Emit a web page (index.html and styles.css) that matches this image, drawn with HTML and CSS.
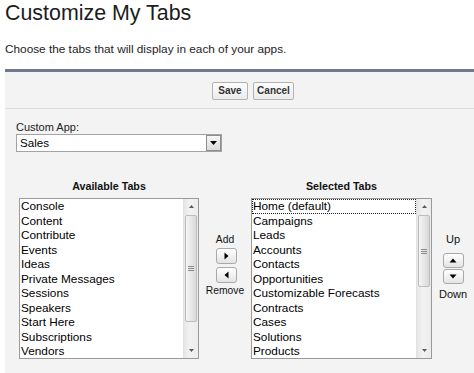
FILE: index.html
```html
<!DOCTYPE html>
<html>
<head>
<meta charset="utf-8">
<title>Customize My Tabs</title>
<link rel="stylesheet" href="styles.css">
</head>
<body>
<h1 class="title">Customize My Tabs</h1>
<p class="intro">Choose the tabs that will display in each of your apps.</p>
<div class="panel">
  <div class="btn-row">
    <button class="btn btn-save">Save</button>
    <button class="btn btn-cancel">Cancel</button>
  </div>
  <div class="panel-body">
    <div class="field-label">Custom App:</div>
    <div class="select">
      <span class="select-value">Sales</span>
      <span class="select-arrow"><svg width="7" height="4" viewBox="0 0 7 4"><path d="M0 0H7L3.5 4Z" fill="#000"/></svg></span>
    </div>
    <div class="duel">
      <div class="col col-avail">
        <div class="col-title">Available Tabs</div>
        <div class="listbox">
          <div class="items">
            <div class="item">Console</div>
            <div class="item">Content</div>
            <div class="item">Contribute</div>
            <div class="item">Events</div>
            <div class="item">Ideas</div>
            <div class="item">Private Messages</div>
            <div class="item">Sessions</div>
            <div class="item">Speakers</div>
            <div class="item">Start Here</div>
            <div class="item">Subscriptions</div>
            <div class="item">Vendors</div>
          </div>
          <div class="scrollbar">
            <div class="sb-btn"><svg width="5" height="3" viewBox="0 0 5 3"><path d="M0 3H5L2.5 0Z" fill="#5a5a5a"/></svg></div>
            <div class="sb-track">
              <div class="sb-thumb thumb-avail"><svg width="6" height="5" viewBox="0 0 6 5"><path d="M0 0.5H6M0 2.5H6M0 4.5H6" stroke="#8a8a8a" stroke-width="1"/></svg></div>
            </div>
            <div class="sb-btn"><svg width="5" height="3" viewBox="0 0 5 3"><path d="M0 0H5L2.5 3Z" fill="#5a5a5a"/></svg></div>
          </div>
        </div>
      </div>
      <div class="mover">
        <div class="mover-label">Add</div>
        <button class="arrow-btn arrow-first"><svg width="5" height="8" viewBox="0 0 5 8"><path d="M0.5 0.5L4.5 4L0.5 7.5Z" fill="#000"/></svg></button>
        <button class="arrow-btn arrow-second"><svg width="5" height="8" viewBox="0 0 5 8"><path d="M4.5 0.5L0.5 4L4.5 7.5Z" fill="#000"/></svg></button>
        <div class="mover-label mover-label-bottom">Remove</div>
      </div>
      <div class="col col-sel">
        <div class="col-title">Selected Tabs</div>
        <div class="listbox">
          <div class="items">
            <div class="item item-focus">Home (default)</div>
            <div class="item">Campaigns</div>
            <div class="item">Leads</div>
            <div class="item">Accounts</div>
            <div class="item">Contacts</div>
            <div class="item">Opportunities</div>
            <div class="item">Customizable Forecasts</div>
            <div class="item">Contracts</div>
            <div class="item">Cases</div>
            <div class="item">Solutions</div>
            <div class="item">Products</div>
          </div>
          <div class="scrollbar">
            <div class="sb-btn"><svg width="5" height="3" viewBox="0 0 5 3"><path d="M0 3H5L2.5 0Z" fill="#5a5a5a"/></svg></div>
            <div class="sb-track">
              <div class="sb-thumb thumb-sel"><svg width="6" height="5" viewBox="0 0 6 5"><path d="M0 0.5H6M0 2.5H6M0 4.5H6" stroke="#8a8a8a" stroke-width="1"/></svg></div>
            </div>
            <div class="sb-btn"><svg width="5" height="3" viewBox="0 0 5 3"><path d="M0 0H5L2.5 3Z" fill="#5a5a5a"/></svg></div>
          </div>
        </div>
      </div>
      <div class="mover mover-order">
        <div class="mover-label order-label">Up</div>
        <button class="arrow-btn order-btn order-first"><svg width="8" height="5" viewBox="0 0 8 5"><path d="M0.5 4.5L4 0.5L7.5 4.5Z" fill="#000"/></svg></button>
        <button class="arrow-btn order-btn order-second"><svg width="8" height="5" viewBox="0 0 8 5"><path d="M0.5 0.5L4 4.5L7.5 0.5Z" fill="#000"/></svg></button>
        <div class="mover-label order-label order-label-bottom">Down</div>
      </div>
    </div>
  </div>
</div>
</body>
</html>
```

FILE: styles.css
```css
html, body {
  margin: 0;
  background: #fff;
}
body {
  padding-top: 1px;
  width: 474px;
  height: 372px;
  overflow: hidden;
  font-family: "Liberation Sans", Arial, sans-serif;
  color: #000;
}
.title {
  margin: 0 0 0 5px;
  font-size: 21.4px;
  font-weight: normal;
  line-height: 24px;
  color: #1c1c1c;
  white-space: nowrap;
}
.intro {
  margin: 17px 0 0 5px;
  font-size: 11.8px;
  line-height: 14px;
  color: #222;
  white-space: nowrap;
}
.panel {
  margin: 13px 0 0 5px;
  width: 469px;
  height: 301px;
  border-top: 3px solid #6f7890;
  background: #f3f3f3;
  overflow: hidden;
}
.btn-row {
  display: flex;
  justify-content: center;
  gap: 5px;
  padding: 10px 0 8px 27px;
  border-bottom: 1px solid #dcdcdc;
}
.btn {
  height: 18px;
  box-sizing: border-box;
  padding: 0;
  border: 1px solid #b3b3b3;
  border-radius: 2px;
  background: linear-gradient(#fdfdfd, #ebebeb);
  font-family: "Liberation Sans", Arial, sans-serif;
  font-size: 10px;
  font-weight: bold;
  color: #333;
  line-height: 16px;
}
.btn-save { width: 36px; }
.btn-cancel { width: 41px; }
.panel-body {
  padding: 12px 0 0 11px;
}
.field-label {
  font-size: 11px;
  line-height: 13px;
  color: #222;
}
.select {
  width: 206px;
  height: 18px;
  box-sizing: border-box;
  border: 1px solid #a3a3a3;
  background: #fff;
  display: flex;
  align-items: center;
  justify-content: space-between;
}
.select-value {
  padding-left: 3px;
  font-size: 11.6px;
  line-height: 16px;
}
.select-arrow {
  width: 15px;
  height: 16px;
  box-sizing: border-box;
  border: 1px solid #8e8e8e;
  background: linear-gradient(#f6f6f6, #dcdcdc);
  display: flex;
  align-items: center;
  justify-content: center;
}
.duel {
  display: flex;
  align-items: flex-start;
  margin: 28px 0 0 3px;
}
.col-avail { width: 180px; }
.col-sel { width: 181px; }
.col-title {
  font-size: 10.7px;
  font-weight: bold;
  line-height: 13px;
  text-align: center;
  color: #111;
  margin-bottom: 5px;
}
.listbox {
  height: 161px;
  box-sizing: border-box;
  border: 1px solid #9a9a9a;
  background: #fff;
  display: flex;
}
.items {
  flex: 1;
  min-width: 0;
  overflow: hidden;
}
.item {
  font-size: 11.8px;
  line-height: 12.5px;
  border: 1px solid transparent;
  white-space: nowrap;
}
.item-focus {
  border: 1px dotted #222;
}
.scrollbar {
  width: 15px;
  display: flex;
  flex-direction: column;
  background: linear-gradient(90deg, #e6e6e6, #f2f2f2 40%, #ececec);
  border-left: 1px solid #e2e2e2;
  box-sizing: border-box;
}
.sb-btn {
  height: 15px;
  display: flex;
  align-items: center;
  justify-content: center;
}
.sb-track {
  flex: 1;
}
.sb-thumb {
  margin: 1px 1px 0;
  box-sizing: border-box;
  border: 1px solid #bcbcbc;
  border-radius: 2px;
  background: linear-gradient(90deg, #f5f5f5, #e4e4e4 60%, #d9d9d9);
  display: flex;
  align-items: center;
  justify-content: center;
}
.thumb-avail { height: 107px; }
.thumb-sel { height: 72px; }
.mover {
  width: 52px;
  padding-top: 54px;
  display: flex;
  flex-direction: column;
  align-items: center;
}
.mover-label {
  font-size: 10.3px;
  line-height: 12px;
  color: #111;
}
.mover-label-bottom { margin-top: 2px; }
.arrow-btn {
  width: 21px;
  height: 16px;
  box-sizing: border-box;
  padding: 0;
  border: 1px solid #a9a9a9;
  border-radius: 3px;
  background: linear-gradient(#ffffff, #e4e4e4);
  display: flex;
  align-items: center;
  justify-content: center;
  margin-left: 2px;
}
.arrow-first { margin-top: 2px; }
.arrow-second { margin-top: 3px; }
.mover-order {
  width: 42px;
  padding-top: 53px;
}
.order-label {
  font-size: 11px;
}
.order-btn {
  height: 15px;
  margin-left: 0;
}
.order-first { margin-top: 8px; }
.order-second { margin-top: 1px; }
.order-label-bottom { margin-top: 4px; }
```
